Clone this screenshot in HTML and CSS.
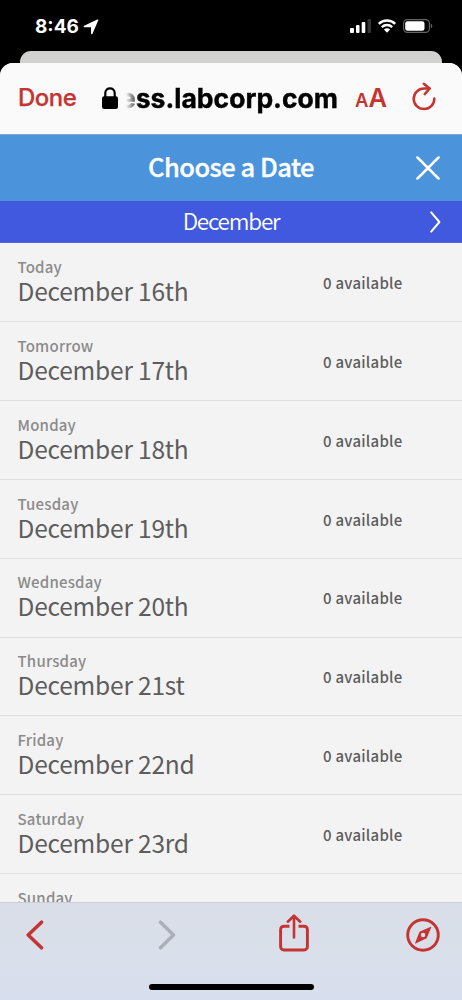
FILE: index.html
```
<!DOCTYPE html>
<html lang="en">
<head>
<meta charset="utf-8">
<meta name="viewport" content="width=device-width, initial-scale=1">
<title>Choose a Date</title>
<link rel="stylesheet" href="styles.css">
</head>
<body>
<div class="phone">
  <header class="status">
    <span class="time">8:46</span>
    <svg class="location" width="16" height="16" viewBox="0 0 16 16"><path d="M14.300.6c.8-.3 1.300.2.9 1L9.600 14.600c-.4.900-1.600.700-1.600-.3V8.700c0-.4-.1-.5-.5-.5H1.500c-1.100 0-1.200-1.100-.3-1.500z" fill="#fff"/></svg>
    <svg class="signal" width="22" height="14" viewBox="0 0 22 14"><rect x="0" y="9" width="4" height="5" rx="1" fill="#fff"/><rect x="6" y="6" width="3.500" height="8" rx="1" fill="#fff"/><rect x="11.700" y="3" width="3.600" height="11" rx="1" fill="#fff"/><rect x="17.500" y="0" width="3.500" height="14" rx="1" fill="#333"/></svg>
    <svg class="wifi" width="18" height="14" viewBox="0 0 18 14"><g fill="none" stroke="#fff" stroke-width="2.300"><path d="M.8 4.800a11.800 11.800 0 0 1 16.400 0"/><path d="M3.800 8.100a7.500 7.500 0 0 1 10.400 0"/></g><path d="M9 13.700 5.900 10.600a4.500 4.500 0 0 1 6.200 0z" fill="#fff"/></svg>
    <svg class="battery" width="30" height="14" viewBox="0 0 30 14"><rect x=".6" y=".6" width="25.800" height="12.800" rx="3.800" fill="none" stroke="#666" stroke-width="1.100"/><rect x="2.200" y="2.200" width="19.300" height="9.600" rx="2.300" fill="#fff"/><path d="M27.800 4.800c2 .7 2 3.700 0 4.400z" fill="#666"/></svg>
  </header>
  <div class="back-card"></div>
  <main class="sheet">
    <nav class="address">
      <span class="done">Done</span>
      <svg class="lock" width="16" height="22" viewBox="0 0 16 22"><rect x="0" y="9.300" width="16" height="12.700" rx="2.200"/><path d="M3.300 10V6.100C3.300-.3 12.700-.3 12.700 6.100V10" fill="none" stroke="#000" stroke-width="2.200"/></svg>
      <span class="url">ess.labcorp.com</span>
      <span class="text-size"><span class="small-a">A</span><span class="large-a">A</span></span>
      <svg class="reload" width="26" height="30" viewBox="0 0 26 30"><g fill="none" stroke="#c43431" stroke-width="2.500" stroke-linecap="round" stroke-linejoin="round"><path d="M18.400 6.500H13A10.300 10.300 0 1 0 23.300 16.500"/><path d="M12.800 1.700 18.600 6.500 13.800 12.100"/></g></svg>
    </nav>
    <div class="title-bar">
      <h1>Choose a Date</h1>
      <svg class="close" width="24" height="24" viewBox="0 0 24 24"><path d="M1.500 1.500 22.500 22.500M22.500 1.500 1.500 22.500" stroke="#fff" stroke-width="2.500" stroke-linecap="round"/></svg>
    </div>
    <div class="month-bar">
      <h2>December</h2>
      <svg class="next" width="11" height="22" viewBox="0 0 11 22"><path d="M1.200 1.400 9.400 11 1.200 20.600" fill="none" stroke="#fff" stroke-width="2" stroke-linecap="round" stroke-linejoin="round"/></svg>
    </div>
    <ul class="dates">
      <li class="row"><div><p class="day">Today</p><p class="date">December 16th</p></div><span class="slots">0 available</span></li>
      <li class="row"><div><p class="day">Tomorrow</p><p class="date">December 17th</p></div><span class="slots">0 available</span></li>
      <li class="row"><div><p class="day">Monday</p><p class="date">December 18th</p></div><span class="slots">0 available</span></li>
      <li class="row"><div><p class="day">Tuesday</p><p class="date">December 19th</p></div><span class="slots">0 available</span></li>
      <li class="row"><div><p class="day">Wednesday</p><p class="date">December 20th</p></div><span class="slots">0 available</span></li>
      <li class="row"><div><p class="day">Thursday</p><p class="date">December 21st</p></div><span class="slots">0 available</span></li>
      <li class="row"><div><p class="day">Friday</p><p class="date">December 22nd</p></div><span class="slots">0 available</span></li>
      <li class="row"><div><p class="day">Saturday</p><p class="date">December 23rd</p></div><span class="slots">0 available</span></li>
      <li class="row"><div><p class="day">Sunday</p></div></li>
    </ul>
  </main>
  <footer class="toolbar">
    <div class="tools">
      <svg class="back" width="18" height="30" viewBox="0 0 18 30"><path d="M15.500 2.200 2.200 15 15.500 27.800" fill="none" stroke="#c43431" stroke-width="3.500" stroke-linecap="round" stroke-linejoin="round"/></svg>
      <svg class="forward" width="18" height="30" viewBox="0 0 18 30"><path d="M2.500 2.200 15.500 15 2.500 27.800" fill="none" stroke="#abafb8" stroke-width="3.500" stroke-linecap="round" stroke-linejoin="round"/></svg>
      <svg class="share" width="30" height="38" viewBox="0 0 30 38"><g fill="none" stroke="#c43431" stroke-width="2.900" stroke-linecap="round" stroke-linejoin="round"><path d="M10.500 12.200H4.800A3.200 3.200 0 0 0 1.600 15.400V32.800A3.200 3.200 0 0 0 4.800 36H25.200A3.200 3.200 0 0 0 28.400 32.800V15.400A3.200 3.200 0 0 0 25.200 12.200H19.500" stroke-linecap="butt"/><path d="M15 23.500V2M8.800 7.700 15 1.700 21.200 7.700" stroke-width="2.600"/></g></svg>
      <svg class="compass" width="34" height="34" viewBox="0 0 34 34"><circle cx="17" cy="17" r="15.300" fill="none" stroke="#c43431" stroke-width="2.900"/><path d="M24.800 8.700c.4-.2.700.1.500.5L20.700 20.300 9.700 25.500c-.5.300-.9-.1-.6-.6L13.500 13.800z" fill="#c43431"/><circle cx="17.100" cy="17" r="2.200" fill="#dadfe9"/></svg>
    </div>
    <div class="home"></div>
  </footer>
</div>
</body>
</html>
```
FILE: styles.css
```
* { box-sizing: border-box; margin: 0; padding: 0; }
body { background: #000; font-family: "Noto Sans CJK SC", "Noto Sans", sans-serif; }
svg { display: block; flex: none; }
.phone { width: 462px; height: 1000px; display: flex; flex-direction: column; overflow: hidden; background: #000; }
.status { height: 51px; flex: none; display: flex; align-items: flex-start; padding: 19px 29px 0 35px; color: #fff; }
.time { width: 44px; font: 700 19px/15px Inter, sans-serif; }
.location { margin-left: 4px; }
.signal { margin-left: auto; }
.wifi { margin-left: 6px; }
.battery { margin-left: 7px; }
.back-card { height: 12px; flex: none; margin: 0 20px; background: #d1d2cf; border-radius: 11px 11px 0 0; }
.sheet { flex: 1; min-height: 0; overflow: hidden; background: #f3f3f3; border-radius: 13px 13px 0 0; }
.address { height: 71px; display: flex; align-items: center; background: #fafafa; padding: 0 25px 2px 18px; }
.done { width: 84px; color: #c43431; font: 500 24px/30px Inter, sans-serif; letter-spacing: -.5px; white-space: nowrap; -webkit-text-stroke: .25px #c43431; }
.lock { margin-top: 1px; }
.url { width: 212px; margin-left: 8px; display: flex; justify-content: flex-end; overflow: hidden; font: 700 26.500px/34px Inter, sans-serif; letter-spacing: 0; white-space: nowrap; -webkit-text-stroke: .4px #000; -webkit-mask-image: linear-gradient(90deg, transparent, #000 14px); mask-image: linear-gradient(90deg, transparent, #000 14px); }
.text-size { margin-left: 17px; width: 34px; display: flex; align-items: baseline; color: #c43431; font-family: Inter, sans-serif; font-weight: 600; }
.small-a { font-size: 18.500px; }
.large-a { font-size: 25.500px; }
.reload { margin-left: auto; margin-bottom: 1px; }
.title-bar { height: 67px; display: grid; grid-template-columns: 46px 1fr 46px; align-items: center; background: #4b94dc; color: #fff; border-top: 1px solid #78a8d8; }
.title-bar h1 { grid-column: 2; padding-bottom: 4px; text-align: center; font-size: 25.500px; line-height: 34px; font-weight: 500; letter-spacing: -.5px; -webkit-text-stroke: .3px #fff; }
.month-bar { height: 42px; display: grid; grid-template-columns: 32px 1fr 32px; align-items: center; background: #4059df; color: #fff; border-bottom: 1px solid #5268df; }
.month-bar h2 { grid-column: 2; padding-bottom: 3px; text-align: center; font-size: 22.500px; line-height: 30px; font-weight: 350; letter-spacing: -1.200px; }
.dates { list-style: none; padding-top: .7px; }
.row { height: 78.800px; display: flex; padding: 13.500px 0 0 17.500px; border-bottom: 1.500px solid #dfdfdf; }
.row > div { width: 305.500px; }
.day { color: #8b8b8b; font-size: 15px; line-height: 20px; font-weight: 500; letter-spacing: .2px; }
.date { color: #5d5d5d; font-size: 24.500px; line-height: 28px; font-weight: 400; letter-spacing: -.2px; }
.slots { margin-top: 15px; color: #5d5d5d; font-size: 15px; line-height: 22px; font-weight: 500; letter-spacing: .25px; }
.toolbar { height: 98px; flex: none; border-top: 1px solid #cbced5; background: linear-gradient(180deg, #d9dee8, #dae0eb 60%, #d7deed); }
.tools { height: 63px; display: flex; align-items: center; padding: 0 22px 0 26px; }
.forward { margin-left: 114px; }
.share { margin-left: 103px; margin-bottom: 3px; }
.compass { margin-left: auto; }
.home { width: 165px; height: 6px; margin: 18px auto 0; border-radius: 3px; background: #000; }
```
